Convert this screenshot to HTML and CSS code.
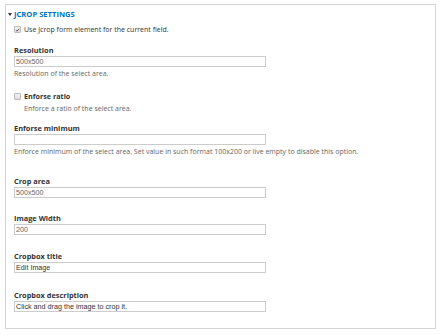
FILE: index.html
```html
<!DOCTYPE html>
<html>
<head>
<meta charset="utf-8">
<link rel="stylesheet" href="styles.css">
</head>
<body>
<div class="fieldset">
  <div class="legend"><span class="tri"></span><span class="legend-text">JCROP SETTINGS</span></div>
  <div class="check-row first">
    <span class="cb checked"><svg viewBox="0 0 7 7" width="7" height="7"><path d="M1.3 3.6 L2.8 5.1 L5.8 1.6" fill="none" stroke="#444" stroke-width="1.2"/></svg></span>
    <span class="check-label">Use Jcrop form element for the current field.</span>
  </div>
  <div class="item res">
    <div class="label">Resolution</div>
    <div class="input">500x500</div>
    <div class="desc">Resolution of the select area.</div>
  </div>
  <div class="check-row ratio">
    <span class="cb"></span>
    <span class="check-label bold">Enforse ratio</span>
  </div>
  <div class="desc indent">Enforce a ratio of the select area.</div>
  <div class="item min">
    <div class="label">Enforse minimum</div>
    <div class="input"></div>
    <div class="desc">Enforce minimum of the select area. Set value in such format 100x200 or live empty to disable this option.</div>
  </div>
  <div class="item crop">
    <div class="label">Crop area</div>
    <div class="input">500x500</div>
  </div>
  <div class="item width">
    <div class="label">Image Width</div>
    <div class="input">200</div>
  </div>
  <div class="item ctitle">
    <div class="label">Cropbox title</div>
    <div class="input dark">Edit Image</div>
  </div>
  <div class="item cdesc">
    <div class="label">Cropbox description</div>
    <div class="input dark">Click and drag the image to crop it.</div>
  </div>
</div>
</body>
</html>
```

FILE: styles.css
```css
html, body {
  margin: 0;
  padding: 0;
  background: #fff;
}
body {
  font-family: "Open Sans", "DejaVu Sans", sans-serif;
  font-size: 7px;
  line-height: 11px;
  color: #333;
}
.fieldset {
  margin: 4px 3px 0 5px;
  border: 1px solid #d4d4d4;
  padding: 4px 8px 16px 8px;
  width: 413px;
}
.legend {
  display: flex;
  align-items: center;
  height: 11px;
  margin-left: -7px;
}
.tri {
  width: 0;
  height: 0;
  border-left: 2px solid transparent;
  border-right: 2px solid transparent;
  border-top: 3px solid #333;
  margin-right: 2px;
  margin-left: 1px;
}
.legend-text {
  color: #0074bd;
  font-weight: bold;
  font-size: 7.6px;
}
.check-row {
  display: flex;
  align-items: center;
  height: 11px;
}
.check-row.first { margin-top: 4px; }
.check-row.ratio { margin-top: 12px; }
.cb {
  width: 5px;
  height: 5px;
  border: 1px solid #bbb;
  border-radius: 1px;
  background: linear-gradient(#f4f4f4, #dcdcdc);
  margin-right: 3px;
  display: flex;
  align-items: center;
  justify-content: center;
  box-sizing: content-box;
}
.cb svg { display: block; width: 6px; height: 6px; }
.check-label { color: #333; }
.check-label.bold { font-weight: bold; font-size: 7.2px; }
.label {
  font-weight: bold;
  font-size: 7.4px;
  color: #333;
  height: 11px;
}
.input {
  width: 252px;
  height: 11px;
  box-sizing: border-box;
  border: 1px solid #ccc;
  font-family: "Liberation Sans", Arial, sans-serif;
  font-size: 7.2px;
  line-height: 9px;
  padding: 0 1px;
  color: #666;
}
.input.dark { color: #333; }
.desc {
  color: #666;
  margin-top: 1px;
}
.desc.indent {
  margin-left: 10px;
  margin-top: 1px;
}
.item.res { margin-top: 10px; }
.item.min { margin-top: 9px; }
.item.crop { margin-top: 19px; }
.item.width { margin-top: 15px; }
.item.ctitle { margin-top: 16px; }
.item.cdesc { margin-top: 17px; }
```
